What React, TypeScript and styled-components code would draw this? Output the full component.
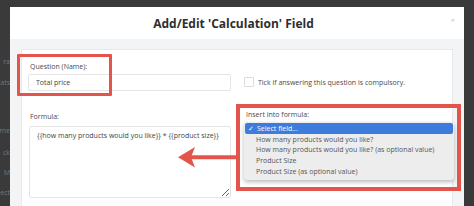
import styled, { createGlobalStyle } from "styled-components"

const GlobalStyle = createGlobalStyle`
   html, body {
      margin: 0;
      padding: 0;
      background: #3a3a3a;
      overflow: hidden;
   }
   body {
      font-family: "Open Sans", "Liberation Sans", sans-serif;
   }
`

const ghostLabels = [
   { text: "ra", gap: 57 },
   { text: "ats", gap: 11 },
   { text: "me", gap: 38 },
   { text: "ck", gap: 12 },
   { text: "M", gap: 10 },
   { text: "ect", gap: 10 },
]

const options = [
   "How many products would you like?",
   "How many products would you like? (as optional value)",
   "Product Size",
   "Product Size (as optional value)",
]

const App = () => {
   return (
      <>
         <GlobalStyle />
         <Page>
            <Backdrop>
               {ghostLabels.map((g) => (
                  <GhostLabel key={g.text} $gap={g.gap}>
                     {g.text}
                  </GhostLabel>
               ))}
            </Backdrop>
            <Modal>
               <Header>
                  <Title>Add/Edit 'Calculation' Field</Title>
                  <Close>×</Close>
               </Header>
               <Body>
                  <Panel>
                     <Column>
                        <Label>Question (Name):</Label>
                        <TextInput readOnly value="Total price" />
                        <Label $top={21}>Formula:</Label>
                        <Formula wrap="off" readOnly value="{{how many products would you like}} * {{product size}}" />
                     </Column>
                     <Column>
                        <CheckRow>
                           <CheckBox />
                           <CheckText>Tick if answering this question is compulsory.</CheckText>
                        </CheckRow>
                        <Label $top={23}>Insert into formula:</Label>
                        <MenuAnchor>
                           <Menu>
                              <MenuItem $selected>
                                 <Tick>✓</Tick>Select field...
                              </MenuItem>
                              {options.map((o) => (
                                 <MenuItem key={o}>{o}</MenuItem>
                              ))}
                           </Menu>
                        </MenuAnchor>
                     </Column>
                  </Panel>
                  <NameHighlight />
                  <InsertHighlight />
                  <Arrow viewBox="0 0 62 24" width="62" height="24">
                     <path d="M14 10.2 L62 10.2 L62 14.2 L14 14.2 Z" fill="#e3554a" />
                     <path d="M2 12.2 L19 2 L15 12.2 L19 22.4 Z" fill="#e3554a" />
                  </Arrow>
               </Body>
            </Modal>
         </Page>
      </>
   )
}

export default App

// Styled Components

const Page = styled.div`
   display: flex;
   width: 474px;
   height: 206px;
   overflow: hidden;
`

const Backdrop = styled.div`
   width: 10px;
   display: flex;
   flex-direction: column;
   align-items: flex-end;
   overflow: hidden;
`

const GhostLabel = styled.span<{ $gap: number }>`
   margin-top: ${({ $gap }) => $gap}px;
   font-size: 7px;
   line-height: 10px;
   color: #777;
   white-space: nowrap;
`

const Modal = styled.div`
   width: 454px;
   margin-top: 7px;
   background: #ffffff;
   display: flex;
   flex-direction: column;
`

const Header = styled.div`
   position: relative;
   height: 32px;
   display: flex;
   align-items: center;
   justify-content: center;
   padding-right: 7px;
`

const Title = styled.h1`
   margin: 0;
   font-size: 12px;
   font-weight: 700;
   color: #2e2e2e;
`

const Close = styled.span`
   position: absolute;
   right: 9px;
   top: 7px;
   font-size: 8px;
   color: #c8c8c8;
`

const Body = styled.div`
   position: relative;
   flex: 1;
   background: #f3f4f5;
   padding: 10px 11px 0 11px;
`

const Panel = styled.div`
   height: 100%;
   background: #ffffff;
   border: 1px solid #e8e9ea;
   border-bottom: none;
   padding: 12px 6px 0 6px;
   display: grid;
   grid-template-columns: 202px 1fr;
   column-gap: 14px;
   align-items: start;
`

const Column = styled.div`
   display: flex;
   flex-direction: column;
   align-items: flex-start;
`

const Label = styled.span<{ $top?: number }>`
   margin-top: ${({ $top }) => $top ?? 0}px;
   margin-left: 2px;
   font-size: 7px;
   line-height: 10px;
   color: #4a4a4a;
`

const TextInput = styled.input`
   box-sizing: border-box;
   width: 203px;
   height: 17px;
   margin-top: 2px;
   padding: 0 7px;
   border: 1px solid #e4e4e4;
   border-radius: 2px;
   font-family: inherit;
   font-size: 7px;
   color: #444;
   outline: none;
`

const Formula = styled.textarea`
   box-sizing: border-box;
   width: 202px;
   height: 72px;
   margin-top: 4px;
   margin-left: 1px;
   padding: 4px 7px;
   border: 1px solid #e4e4e4;
   border-radius: 2px;
   font-family: inherit;
   font-size: 7px;
   line-height: 10px;
   color: #444;
   outline: none;
   overflow: hidden;
   resize: vertical;
`

const CheckRow = styled.div`
   display: flex;
   align-items: center;
   gap: 4px;
   margin-top: 15px;
   height: 10px;
`

const CheckBox = styled.span`
   box-sizing: border-box;
   width: 10px;
   height: 10px;
   border: 1px solid #dcdcdc;
   border-radius: 1px;
   background: #fff;
`

const CheckText = styled.span`
   font-size: 7px;
   color: #4a4a4a;
`

const MenuAnchor = styled.div`
   position: relative;
   width: 100%;
   height: 58px;
   margin-top: 2px;
`

const Menu = styled.div`
   position: absolute;
   left: 0;
   top: 0;
   width: 210px;
   padding: 1px 0 3px;
   background: #ededed;
   border-radius: 3px;
   box-shadow: 0 2px 4px rgba(0, 0, 0, 0.28);
   display: flex;
   flex-direction: column;
`

const MenuItem = styled.div<{ $selected?: boolean }>`
   display: flex;
   align-items: center;
   height: 10.8px;
   padding-left: 12px;
   font-size: 7px;
   white-space: nowrap;
   color: ${({ $selected }) => ($selected ? "#ffffff" : "#555555")};
   background: ${({ $selected }) => ($selected ? "#3d7bdc" : "transparent")};
   margin: ${({ $selected }) => ($selected ? "0 1px" : "0")};
   border-radius: ${({ $selected }) => ($selected ? "2px" : "0")};
`

const Tick = styled.span`
   width: 0;
   margin-left: -9px;
   margin-right: 9px;
   font-size: 7px;
`

const NameHighlight = styled.div`
   position: absolute;
   left: 7px;
   top: 15px;
   width: 89px;
   height: 36px;
   border: 3px solid #e3554a;
   border-radius: 1px;
`

const InsertHighlight = styled.div`
   position: absolute;
   left: 226px;
   top: 65px;
   width: 217px;
   height: 79px;
   border: 4px solid #e3554a;
`

const Arrow = styled.svg`
   position: absolute;
   left: 166px;
   top: 106px;
`
